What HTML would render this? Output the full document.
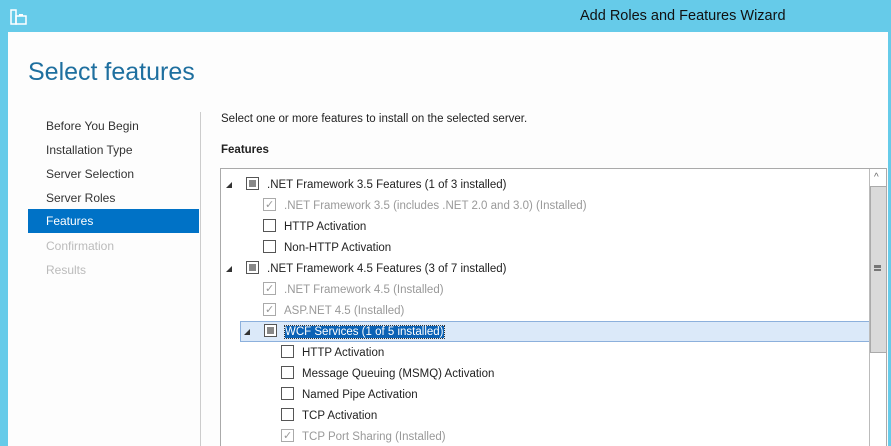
<html style="overflow:hidden;width:891px;height:446px"><head><style>
body{margin:0;width:891px;height:446px;overflow:hidden;background:#66cbe9;font-family:"Liberation Sans",sans-serif;position:relative}
.c{position:absolute;left:8px;top:32px;width:880px;height:414px;background:#fdfdfd}
.t{position:absolute;left:580px;top:8px;font-size:14.5px;color:#111}
.h{position:absolute;left:28px;top:58px;font-size:25px;color:#1e6f9f;font-weight:300}
.nav div{position:absolute;left:28px;width:171px;height:24px;line-height:24px;padding-left:18px;box-sizing:border-box;font-size:12px;color:#333}
.vd{position:absolute;left:200px;top:112px;width:1px;height:334px;background:#ccc}
.lb{position:absolute;left:220px;top:168px;width:667px;height:278px;border:1px solid #aaa;border-bottom:none;box-sizing:border-box;background:#fff}
.r{position:absolute;height:21px;line-height:21px;font-size:11.5px;color:#222;white-space:nowrap}
.r.g{color:#999}
.cb{display:inline-block;width:11px;height:11px;border:1px solid #555;vertical-align:-2px;margin-right:8px;position:relative;background:#fff}
.cb.p::after{content:"";position:absolute;left:2px;top:2px;width:7px;height:7px;background:#888}
.cb.k{border-color:#aaa}
.cb.k::after{content:"✓";position:absolute;left:1px;top:-4px;font-size:11px;color:#999}
.tri{display:inline-block;width:0;height:0;border-left:6px solid transparent;border-bottom:6px solid #333;margin-right:14px;vertical-align:0}
</style></head><body>
<svg style="position:absolute;left:10px;top:9px" width="17" height="17"><rect x="1" y="1" width="5" height="14" fill="none" stroke="#fff" stroke-width="1.5"/><rect x="6" y="7" width="10" height="8" fill="none" stroke="#fff" stroke-width="1.5"/><rect x="9" y="5" width="4" height="2" fill="#fff"/></svg>
<div class="t">Add Roles and Features Wizard</div>
<div class="c"></div>
<div class="h">Select features</div>
<div class="nav">
<div style="top:114px">Before You Begin</div>
<div style="top:138px">Installation Type</div>
<div style="top:162px">Server Selection</div>
<div style="top:186px">Server Roles</div>
<div style="top:209px;background:#0072c6;color:#fff">Features</div>
<div style="top:234px;color:#bbb">Confirmation</div>
<div style="top:258px;color:#bbb">Results</div>
</div>
<div class="vd"></div>
<div style="position:absolute;left:221px;top:113px;font-size:11.5px;color:#222">Select one or more features to install on the selected server.</div>
<div style="position:absolute;left:221px;top:144px;font-size:11.5px;color:#222;font-weight:bold">Features</div>
<div class="lb"></div>
<div style="position:absolute;left:240px;top:321px;width:628px;height:19px;background:#dbe9f9;border:1px solid #8cb0dc"></div>
<div class="r" style="left:226px;top:175px"><span class="tri"></span><span class="cb p"></span>.NET Framework 3.5 Features (1 of 3 installed)</div>
<div class="r g" style="left:263px;top:196px"><span class="cb k"></span>.NET Framework 3.5 (includes .NET 2.0 and 3.0) (Installed)</div>
<div class="r" style="left:263px;top:217px"><span class="cb"></span>HTTP Activation</div>
<div class="r" style="left:263px;top:238px"><span class="cb"></span>Non-HTTP Activation</div>
<div class="r" style="left:226px;top:259px"><span class="tri"></span><span class="cb p"></span>.NET Framework 4.5 Features (3 of 7 installed)</div>
<div class="r g" style="left:263px;top:280px"><span class="cb k"></span>.NET Framework 4.5 (Installed)</div>
<div class="r g" style="left:263px;top:301px"><span class="cb k"></span>ASP.NET 4.5 (Installed)</div>
<div class="r" style="left:244px;top:322px"><span class="tri"></span><span class="cb p"></span><span style="background:#0b62b5;color:#fff;outline:1px dotted #333">WCF Services (1 of 5 installed)</span></div>
<div class="r" style="left:281px;top:343px"><span class="cb"></span>HTTP Activation</div>
<div class="r" style="left:281px;top:364px"><span class="cb"></span>Message Queuing (MSMQ) Activation</div>
<div class="r" style="left:281px;top:385px"><span class="cb"></span>Named Pipe Activation</div>
<div class="r" style="left:281px;top:406px"><span class="cb"></span>TCP Activation</div>
<div class="r g" style="left:281px;top:427px"><span class="cb k"></span>TCP Port Sharing (Installed)</div>
<div style="position:absolute;left:869px;top:169px;width:1px;height:277px;background:#bbb"></div>
<div style="position:absolute;left:874px;top:172px;font-size:10px;color:#666">^</div>
<div style="position:absolute;left:870px;top:186px;width:15px;height:165px;background:#dadada;border:1px solid #aaa"></div>
<div style="position:absolute;left:874px;top:265px;width:7px;height:6px;border-top:2px solid #777;border-bottom:2px solid #777;box-sizing:border-box"></div>
<div style="position:absolute;left:874px;top:267px;width:7px;height:1px;background:#777"></div>
</body></html>
